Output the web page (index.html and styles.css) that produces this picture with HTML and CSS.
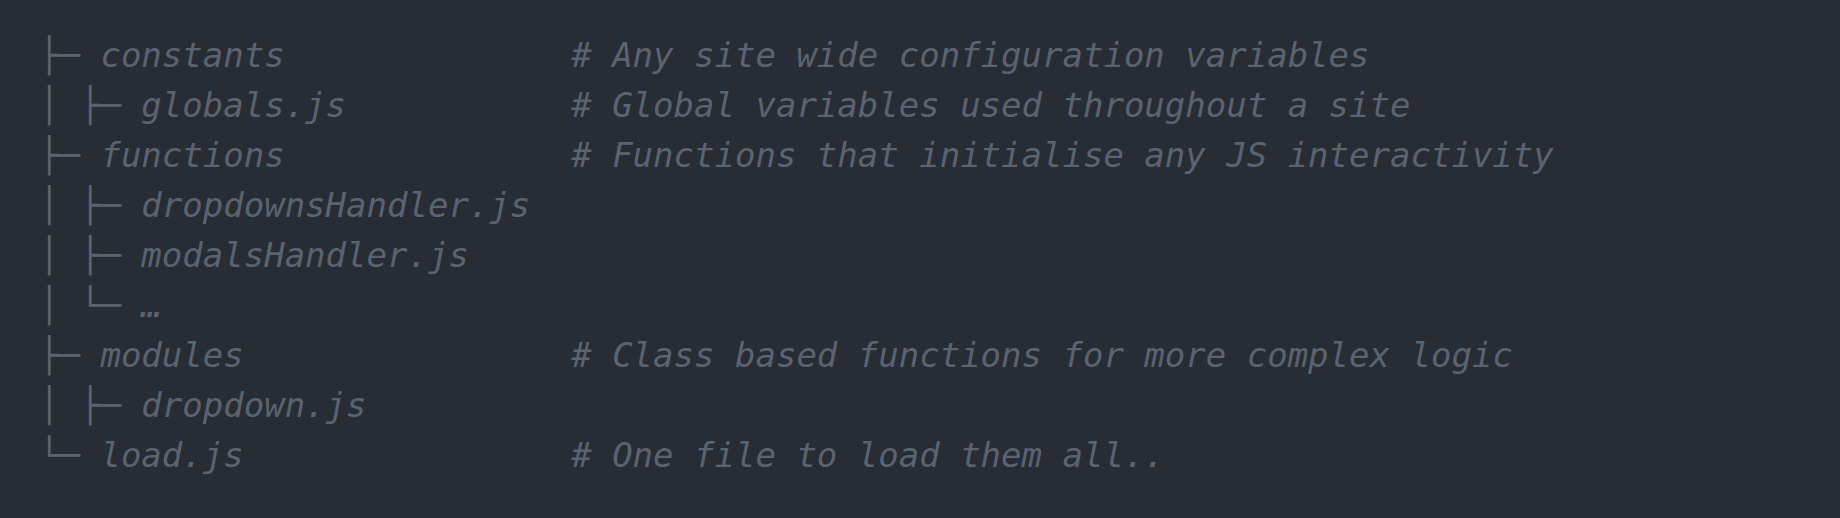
FILE: index.html
```html
<!DOCTYPE html>
<html lang="en">
<head>
<meta charset="utf-8">
<title>Folder structure</title>
<link rel="stylesheet" href="styles.css">
</head>
<body>
<pre class="tree"><code>├─ constants              # Any site wide configuration variables
│ ├─ globals.js           # Global variables used throughout a site
├─ functions              # Functions that initialise any JS interactivity
│ ├─ dropdownsHandler.js
│ ├─ modalsHandler.js
│ └─ …
├─ modules                # Class based functions for more complex logic
│ ├─ dropdown.js
└─ load.js                # One file to load them all..</code></pre>
</body>
</html>
```

FILE: styles.css
```css
html, body {
  margin: 0;
  padding: 0;
  background: #282c34;
}

body {
  width: 1840px;
  height: 518px;
  overflow: hidden;
}

.tree {
  margin: 0;
  padding: 30px 39px;
  font-family: "DejaVu Sans Mono", "Liberation Mono", monospace;
  font-size: 34px;
  line-height: 50px;
  font-style: italic;
  color: #5c6370;
  white-space: pre;
}

.tree code {
  font: inherit;
}
```
